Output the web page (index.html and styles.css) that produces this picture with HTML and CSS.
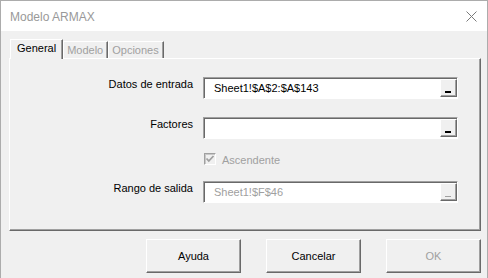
FILE: index.html
```html
<!DOCTYPE html>
<html lang="es">
<head>
<meta charset="utf-8">
<title>Modelo ARMAX</title>
<link rel="stylesheet" href="styles.css">
</head>
<body>
<div class="window">
  <div class="titlebar">
    <span class="title">Modelo ARMAX</span>
    <svg class="close" width="11" height="11" viewBox="0 0 11 11"><path d="M0.5 0.5 L10.5 10.5 M10.5 0.5 L0.5 10.5" stroke="#7a7a7a" stroke-width="1" fill="none"/></svg>
  </div>
  <div class="client">
    <div class="tabs">
      <div class="tab active">General</div>
      <div class="tab tab-modelo">Modelo</div>
      <div class="tab tab-opciones">Opciones</div>
    </div>
    <div class="panel">
      <div class="row row-first">
        <span class="label">Datos de entrada</span>
        <div class="field">
          <span class="value">Sheet1!$A$2:$A$143</span>
          <span class="pick"><span class="dash"></span></span>
        </div>
      </div>
      <div class="row row-second">
        <span class="label">Factores</span>
        <div class="field">
          <span class="value"></span>
          <span class="pick"><span class="dash"></span></span>
        </div>
      </div>
      <div class="row row-check">
        <span class="label"></span>
        <div class="check">
          <span class="box"><svg width="10" height="10" viewBox="0 0 10 10"><path d="M1.5 4.5 L3.8 7 L8.5 2" stroke="#a0a0a0" stroke-width="1.8" fill="none"/></svg></span>
          <span class="check-label">Ascendente</span>
        </div>
      </div>
      <div class="row row-third">
        <span class="label">Rango de salida</span>
        <div class="field disabled">
          <span class="value">Sheet1!$F$46</span>
          <span class="pick"><span class="dash"></span></span>
        </div>
      </div>
    </div>
    <div class="buttons">
      <div class="btn">Ayuda</div>
      <div class="btn">Cancelar</div>
      <div class="btn disabled-btn">OK</div>
    </div>
  </div>
</div>
</body>
</html>
```

FILE: styles.css
```css
html, body {
  margin: 0;
  padding: 0;
  background: #f0f0f0;
}

body {
  font-family: "Liberation Sans", Arial, sans-serif;
  font-size: 11px;
  color: #000;
}

.window {
  box-sizing: border-box;
  width: 488px;
  height: 278px;
  border: 1px solid #acacac;
  border-bottom: none;
  overflow: hidden;
  background: #f0f0f0;
}

.titlebar {
  height: 30px;
  background: #fff;
  display: flex;
  align-items: center;
  justify-content: space-between;
  padding: 0 10px 0 9px;
}

.title {
  font-size: 12px;
  color: #999;
  margin-top: 1px;
}

.close {
  display: block;
  margin-top: 0;
}

.client {
  padding: 8px 6px 0 8px;
}

.tabs {
  display: flex;
  align-items: flex-end;
  height: 19px;
  padding-left: 1px;
}

.tab {
  box-sizing: border-box;
  height: 17px;
  border-top: 1px solid #fff;
  border-left: 1px solid #fff;
  border-right: 1px solid #696969;
  box-shadow: inset -1px 0 0 #a0a0a0;
  color: #a0a0a0;
  padding: 1px 4px 0 3px;
  line-height: 14px;
}

.tab.active {
  position: relative;
  z-index: 1;
  height: 20px;
  margin-bottom: -1px;
  color: #000;
  padding: 1px 6px 0 6px;
  background: #f0f0f0;
  line-height: 14px;
}

.panel {
  box-sizing: border-box;
  height: 173px;
  border-top: 1px solid #fff;
  border-left: 1px solid #fff;
  border-right: 1px solid #696969;
  border-bottom: 1px solid #696969;
  box-shadow: inset -1px -1px 0 #a0a0a0;
  padding-top: 18px;
}

.row {
  display: grid;
  grid-template-columns: 183px 255px;
  column-gap: 10px;
  align-items: start;
}

.row-second { margin-top: 18px; }
.row-check { margin-top: 14px; }
.row-third { margin-top: 16px; }

.label {
  text-align: right;
  line-height: 14px;
}

.field {
  box-sizing: border-box;
  height: 22px;
  width: 255px;
  background: #fff;
  border-top: 1px solid #a0a0a0;
  border-left: 1px solid #a0a0a0;
  border-right: 1px solid #fff;
  border-bottom: 1px solid #fff;
  box-shadow: inset 1px 1px 0 #696969;
  display: flex;
  align-items: center;
  padding-left: 10px;
}

.value {
  flex: 1;
  line-height: 14px;
  margin-bottom: 1px;
}

.field.disabled .value {
  color: #a0a0a0;
}

.pick {
  box-sizing: border-box;
  width: 17px;
  height: 18px;
  background: #f0f0f0;
  border-top: 1px solid #fff;
  border-left: 1px solid #fff;
  border-right: 1px solid #696969;
  border-bottom: 1px solid #696969;
  box-shadow: inset -1px -1px 0 #a0a0a0;
  display: flex;
  align-items: flex-end;
  justify-content: center;
  padding-bottom: 3px;
}

.dash {
  display: block;
  width: 6px;
  height: 2px;
  background: #000;
  margin-left: -1px;
}

.field.disabled .dash {
  background: #a0a0a0;
  height: 1px;
}

.check {
  display: flex;
  align-items: center;
  height: 12px;
  margin-left: 1px;
}

.box {
  box-sizing: border-box;
  width: 12px;
  height: 12px;
  border-top: 1px solid #a0a0a0;
  border-left: 1px solid #a0a0a0;
  border-right: 1px solid #fff;
  border-bottom: 1px solid #fff;
  box-shadow: inset 1px 1px 0 #c8c8c8;
  background: #f0f0f0;
  display: flex;
  align-items: center;
  justify-content: center;
}

.box svg {
  display: block;
}

.check-label {
  margin-left: 6px;
  color: #a0a0a0;
  line-height: 14px;
  margin-top: 1px;
}

.buttons {
  display: flex;
  justify-content: flex-end;
  gap: 25px;
  margin-top: 8px;
}

.btn {
  box-sizing: border-box;
  width: 95px;
  height: 34px;
  background: #f0f0f0;
  border-top: 1px solid #fff;
  border-left: 1px solid #fff;
  border-right: 1px solid #696969;
  border-bottom: 1px solid #696969;
  box-shadow: inset -1px -1px 0 #a0a0a0;
  display: flex;
  align-items: center;
  justify-content: center;
  line-height: 14px;
}

.disabled-btn {
  color: #a0a0a0;
}
```
